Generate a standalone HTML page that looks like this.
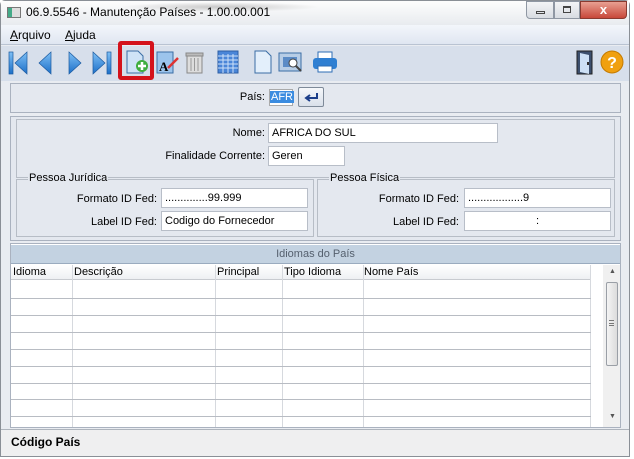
<!DOCTYPE html>
<html><head><meta charset="utf-8"><style>
*{box-sizing:border-box;margin:0;padding:0}
body{width:634px;height:459px;overflow:hidden;background:#fff;font-family:"Liberation Sans",sans-serif;font-size:11px;color:#000;position:relative}
.a{position:absolute}
.win{left:0;top:0;width:630px;height:457px;border:1px solid #8a8f96;border-radius:5px 5px 0 0;background:#e9ecf1}
.title{left:1px;top:1px;width:628px;height:24px;background:linear-gradient(#fdfdfd,#e8ebef)}
.menu{left:1px;top:25px;width:628px;height:20px;background:linear-gradient(#f3f6fb,#dfe6f1);border-bottom:1px solid #b9c3d2}
.tool{left:1px;top:46px;width:628px;height:35px;background:#d7dfeb}
.panel{border:1px solid #aab2bf;background:#e4e8ef}
.inp{background:#fff;border:1px solid #b8bec8;height:20px;padding:0 3px;line-height:19px;font-size:11px}
.lbl{text-align:right;font-size:11px}
.grp{border:1px solid #b7bdc6}
.gl{background:#e4e8ef;padding:0 1px;font-size:11px}
.vl{width:1px;background:#d6d9de}
.hl{height:1px;background:#b8bcc3}
</style></head><body>
<div class="a win"></div>
<div class="a title"></div>
<div class="a" style="left:120px;top:2px;width:200px;height:10px;background:radial-gradient(ellipse,#c8c8c8,rgba(255,255,255,0) 70%)"></div>
<div class="a" style="left:7px;top:7px;width:14px;height:11px;border:1px solid #777;background:linear-gradient(90deg,#4a8 0 4px,#ddd 4px)"></div>
<div class="a" style="left:26px;top:5px;font-size:12px">06.9.5546 - Manutenção Países - 1.00.00.001</div>
<div class="a" style="left:526px;top:1px;width:28px;height:18px;border:1px solid #8f97a3;border-radius:0 0 0 4px;background:linear-gradient(#f3f4f6,#d8dce2)"><div class="a" style="left:9px;top:9px;width:9px;height:3px;border:1px solid #444"></div></div>
<div class="a" style="left:554px;top:1px;width:26px;height:18px;border:1px solid #8f97a3;background:linear-gradient(#f3f4f6,#d8dce2)"><div class="a" style="left:8px;top:4px;width:8px;height:7px;border:1px solid #444;border-top-width:2px"></div></div>
<div class="a" style="left:580px;top:1px;width:47px;height:18px;border:1px solid #8a3a30;border-radius:0 0 4px 0;background:linear-gradient(#e8a092,#c8483a);color:#fff;font-weight:bold;font-size:13px;text-align:center;line-height:16px">x</div>
<div class="a menu"></div>
<div class="a" style="left:10px;top:28px;font-size:12px"><u>A</u>rquivo</div>
<div class="a" style="left:65px;top:28px;font-size:12px"><u>A</u>juda</div>
<div class="a tool"></div>
<svg class="a" style="left:6px;top:50px" width="110" height="26">
<defs><linearGradient id="b" x1="0" y1="0" x2="0" y2="1"><stop offset="0" stop-color="#7fc0f5"/><stop offset="1" stop-color="#1c6fc8"/></linearGradient></defs>
<rect x="3" y="2" width="4" height="22" fill="url(#b)" stroke="#1b5aa0" stroke-width=".7"/><path d="M21 2 L9 13 L21 24Z" fill="url(#b)" stroke="#1b5aa0" stroke-width=".7"/>
<path d="M45 2 L33 13 L45 24Z" fill="url(#b)" stroke="#1b5aa0" stroke-width=".7"/>
<path d="M63 2 L75 13 L63 24Z" fill="url(#b)" stroke="#1b5aa0" stroke-width=".7"/>
<path d="M87 2 L99 13 L87 24Z" fill="url(#b)" stroke="#1b5aa0" stroke-width=".7"/><rect x="101" y="2" width="4" height="22" fill="url(#b)" stroke="#1b5aa0" stroke-width=".7"/>
</svg>
<div class="a" style="left:118px;top:41px;width:36px;height:39px;border:4px solid #d4121b;border-radius:3px"></div>
<svg class="a" style="left:124px;top:49px" width="26" height="26"><path d="M3 2h11l5 5v17H3Z" fill="#cfe3f7" stroke="#3b6ea5"/><circle cx="18" cy="17" r="6" fill="#3fae3f"/><path d="M18 13v8M14 17h8" stroke="#fff" stroke-width="2.5"/></svg>
<svg class="a" style="left:155px;top:49px" width="26" height="26"><rect x="2" y="3" width="16" height="21" fill="#9cc4ec" stroke="#3b6ea5"/><text x="4" y="22" font-size="13" font-family="Liberation Serif" font-weight="bold">A</text><path d="M13 19 L23 9" stroke="#d33" stroke-width="2.5"/></svg>
<svg class="a" style="left:182px;top:49px" width="26" height="26"><rect x="4" y="4" width="17" height="3" fill="#bbb" stroke="#888"/><rect x="5" y="7" width="15" height="17" fill="#ddd" stroke="#888"/><path d="M9 9v13M12.5 9v13M16 9v13" stroke="#999"/></svg>
<svg class="a" style="left:215px;top:49px" width="26" height="26"><rect x="3" y="2" width="20" height="22" fill="#4a86d8" stroke="#2d5fa5"/><path d="M3 7h20M3 11h20M3 15h20M3 19h20M8 5v19M13 5v19M18 5v19" stroke="#cde0f8"/></svg>
<svg class="a" style="left:250px;top:49px" width="26" height="26"><path d="M5 2h11l5 5v17H5Z" fill="#e3effb" stroke="#3b6ea5"/></svg>
<svg class="a" style="left:277px;top:49px" width="28" height="26"><rect x="2" y="4" width="22" height="18" fill="#b7cde6" stroke="#3b6ea5"/><rect x="6" y="8" width="14" height="10" fill="#5b8bc6"/><circle cx="16" cy="14" r="4" fill="#fff" stroke="#444"/><path d="M19 17l5 5" stroke="#444" stroke-width="2"/></svg>
<svg class="a" style="left:311px;top:49px" width="28" height="26"><rect x="7" y="3" width="14" height="7" fill="#fff" stroke="#2d6cb5"/><rect x="2" y="9" width="24" height="11" rx="3" fill="#2f7fd2"/><rect x="7" y="17" width="14" height="6" fill="#fff" stroke="#2d6cb5"/></svg>
<svg class="a" style="left:572px;top:49px" width="26" height="28"><rect x="5" y="2" width="15" height="23" fill="#3c4f6d" stroke="#222"/><path d="M8 4l9 2v19l-9-2Z" fill="#cde0f5"/><rect x="15" y="13" width="2" height="3" fill="#333"/></svg>
<svg class="a" style="left:600px;top:50px" width="24" height="24"><circle cx="12" cy="12" r="11" fill="#f0a010" stroke="#c47a00"/><text x="12" y="18" text-anchor="middle" font-size="16" font-weight="bold" fill="#fff" font-family="Liberation Sans">?</text></svg>

<div class="a panel" style="left:10px;top:83px;width:611px;height:30px"></div>
<div class="a lbl" style="left:200px;top:91px;width:65px">País:</div>
<div class="a" style="left:269px;top:89px;width:24px;height:17px;background:#fff;border:1px solid #aaa;line-height:14px"><span style="background:#3b8ce0;color:#fff;font-size:11px;padding:0 1px">AFR</span></div>
<div class="a" style="left:298px;top:87px;width:26px;height:20px;border:1px solid #7e8a99;border-radius:2px;background:linear-gradient(#f6f8fb,#d9e0ea)"><svg class="a" style="left:5px;top:4px" width="16" height="11"><path d="M13 1v5H3M6 3L2 6l4 3" fill="none" stroke="#1d3f8a" stroke-width="2"/></svg></div>

<div class="a panel" style="left:10px;top:116px;width:611px;height:125px"></div>
<div class="a grp" style="left:16px;top:119px;width:599px;height:59px"></div>
<div class="a lbl" style="left:150px;top:127px;width:115px">Nome:</div>
<div class="a inp" style="left:268px;top:123px;width:230px">AFRICA DO SUL</div>
<div class="a lbl" style="left:150px;top:150px;width:115px">Finalidade Corrente:</div>
<div class="a inp" style="left:268px;top:146px;width:77px">Geren</div>
<div class="a grp" style="left:16px;top:179px;width:298px;height:58px"></div>
<div class="a gl" style="left:28px;top:172px">Pessoa Jurídica</div>
<div class="a grp" style="left:317px;top:179px;width:298px;height:58px"></div>
<div class="a gl" style="left:329px;top:172px">Pessoa Física</div>
<div class="a lbl" style="left:50px;top:193px;width:107px">Formato ID Fed:</div>
<div class="a inp" style="left:161px;top:188px;width:147px">..............99.999</div>
<div class="a lbl" style="left:50px;top:216px;width:107px">Label ID Fed:</div>
<div class="a inp" style="left:161px;top:211px;width:147px">Codigo do Fornecedor</div>
<div class="a lbl" style="left:352px;top:193px;width:107px">Formato ID Fed:</div>
<div class="a inp" style="left:464px;top:188px;width:147px">..................9</div>
<div class="a lbl" style="left:352px;top:216px;width:107px">Label ID Fed:</div>
<div class="a inp" style="left:464px;top:211px;width:147px;text-align:center">:</div>

<div class="a panel" style="left:10px;top:243px;width:611px;height:185px;background:#fff"></div>
<div class="a" style="left:11px;top:245px;width:609px;height:19px;background:#c3d2e1;border-bottom:1px solid #9aabbf;text-align:center;color:#55606e;line-height:18px">Idiomas do País</div>
<div class="a" style="left:11px;top:265px;width:580px;height:15px;background:linear-gradient(#fff,#eef0f3);border-bottom:1px solid #c8cbd0"></div>
<div class="a" style="left:13px;top:266px">Idioma</div>
<div class="a" style="left:74px;top:266px">Descrição</div>
<div class="a" style="left:217px;top:266px">Principal</div>
<div class="a" style="left:284px;top:266px">Tipo Idioma</div>
<div class="a" style="left:364px;top:266px">Nome País</div>
<div class="a vl" style="left:72px;top:265px;height:162px"></div>
<div class="a vl" style="left:215px;top:265px;height:162px"></div>
<div class="a vl" style="left:282px;top:265px;height:162px"></div>
<div class="a vl" style="left:363px;top:265px;height:162px"></div>
<div class="a vl" style="left:590px;top:265px;height:162px"></div>
<div class="a hl" style="left:11px;top:298px;width:580px"></div>
<div class="a hl" style="left:11px;top:315px;width:580px"></div>
<div class="a hl" style="left:11px;top:332px;width:580px"></div>
<div class="a hl" style="left:11px;top:349px;width:580px"></div>
<div class="a hl" style="left:11px;top:366px;width:580px"></div>
<div class="a hl" style="left:11px;top:383px;width:580px"></div>
<div class="a hl" style="left:11px;top:399px;width:580px"></div>
<div class="a hl" style="left:11px;top:416px;width:580px"></div>
<div class="a" style="left:603px;top:265px;width:17px;height:162px;background:#f0f0f0"></div>
<div class="a" style="left:609px;top:268px;font-size:7px;color:#555">▲</div>
<div class="a" style="left:609px;top:413px;font-size:7px;color:#555">▼</div>
<div class="a" style="left:606px;top:282px;width:12px;height:84px;border:1px solid #9a9fa6;border-radius:2px;background:linear-gradient(90deg,#f4f4f4,#dcdcdc)"></div>
<div class="a" style="left:609px;top:320px;width:5px;height:6px;border-top:1px solid #777;border-bottom:1px solid #777"></div>
<div class="a" style="left:609px;top:323px;width:5px;height:1px;background:#777"></div>

<div class="a" style="left:1px;top:429px;width:628px;height:27px;background:#efeff0;border-top:1px solid #aeb4bc"></div>
<div class="a" style="left:11px;top:435px;font-weight:bold;font-size:12px">Código País</div>
</body></html>
